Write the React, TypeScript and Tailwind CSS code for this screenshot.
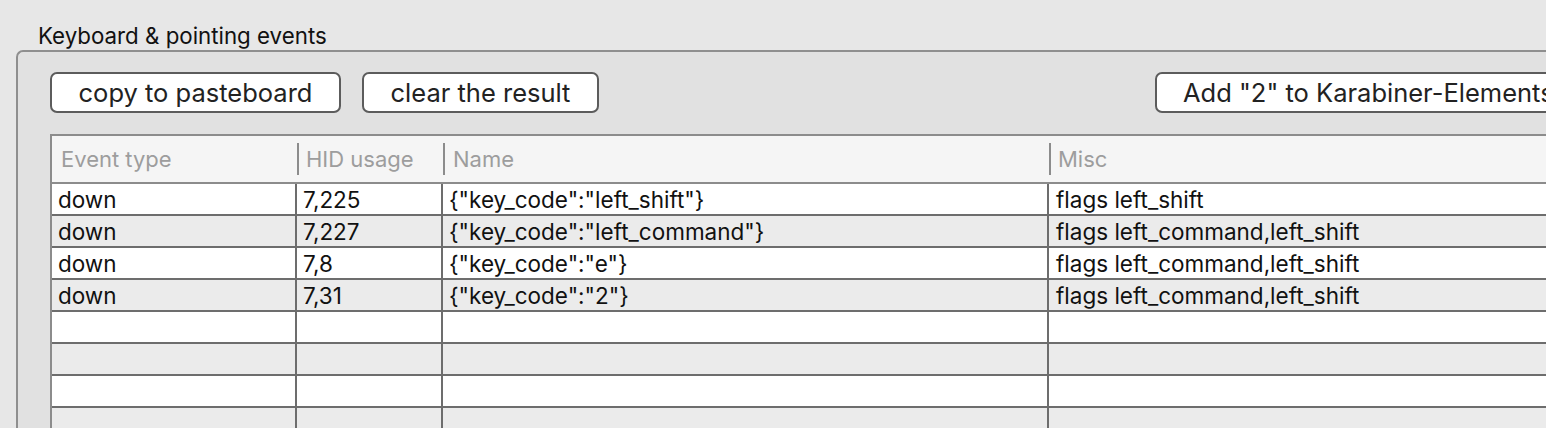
import React from "react";

const rows: [string, string, string, string][] = [
  ["down", "7,225", '{"key_code":"left_shift"}', "flags left_shift"],
  ["down", "7,227", '{"key_code":"left_command"}', "flags left_command,left_shift"],
  ["down", "7,8", '{"key_code":"e"}', "flags left_command,left_shift"],
  ["down", "7,31", '{"key_code":"2"}', "flags left_command,left_shift"],
  ["", "", "", ""],
  ["", "", "", ""],
  ["", "", "", ""],
  ["", "", "", ""],
];

export default function App() {
  return (
    <div
      className="w-[1546px] h-[428px] overflow-hidden bg-[#e7e7e7] text-[#1a1a1a]"
      style={{ fontFamily: "Inter, 'Noto Sans', 'Liberation Sans', sans-serif" }}
    >
      <div className="h-[50px] pt-[24px] pl-[38px] text-[22.3px] leading-[24px] text-[#111]">
        Keyboard &amp; pointing events
      </div>
      <div className="ml-[16px] w-[1600px] h-[400px] border-l-2 border-t-2 border-[#8f8f8f] rounded-tl-[7px] bg-[#e1e1e1] pt-[20px] pl-[32px]">
        <div className="flex h-[41px]">
          <button className="w-[291px] h-[41px] rounded-[7px] border-2 border-[#5c5c5c] bg-white text-[25.5px] leading-[37px] text-[#222]">
            copy to pasteboard
          </button>
          <button className="ml-[21px] w-[237px] h-[41px] rounded-[7px] border-2 border-[#5c5c5c] bg-white text-[25.5px] leading-[37px] text-[#222]">
            clear the result
          </button>
          <button className="ml-[556px] w-[440px] h-[41px] rounded-[7px] border-2 border-[#5c5c5c] bg-white text-[25.5px] leading-[37px] text-[#222] text-left pl-[26px] whitespace-nowrap">
            Add "2" to Karabiner-Elements
          </button>
        </div>
        <div className="mt-[21px] border-l-2 border-t-2 border-[#8c8c8c] w-[1560px]">
          <div className="flex h-[48px] bg-[#f5f5f5] border-b-2 border-[#8c8c8c] items-center text-[22px] text-[#9d9d9d]">
            <div className="w-[245px] pl-[9px]">Event type</div>
            <div className="w-[2px] h-[32px] bg-[#8c8c8c]" />
            <div className="w-[144px] pl-[7px]">HID usage</div>
            <div className="w-[2px] h-[32px] bg-[#8c8c8c]" />
            <div className="w-[604px] pl-[8px]">Name</div>
            <div className="w-[2px] h-[32px] bg-[#8c8c8c]" />
            <div className="flex-1 pl-[7px]">Misc</div>
          </div>
          {rows.map((r, i) => (
            <div
              key={i}
              className={
                "flex h-[32px] border-b-2 border-[#6d6d6d] text-[22.5px] leading-[32px] text-[#111] " +
                (i % 2 === 0 ? "bg-white" : "bg-[#ebebeb]")
              }
            >
              <div className="w-[245px] pl-[6px] border-r-2 border-[#6d6d6d]">{r[0]}</div>
              <div className="w-[146px] pl-[6px] border-r-2 border-[#6d6d6d]">{r[1]}</div>
              <div className="w-[606px] pl-[6px] border-r-2 border-[#6d6d6d]">{r[2]}</div>
              <div className="flex-1 pl-[7px]">{r[3]}</div>
            </div>
          ))}
        </div>
      </div>
    </div>
  );
}
